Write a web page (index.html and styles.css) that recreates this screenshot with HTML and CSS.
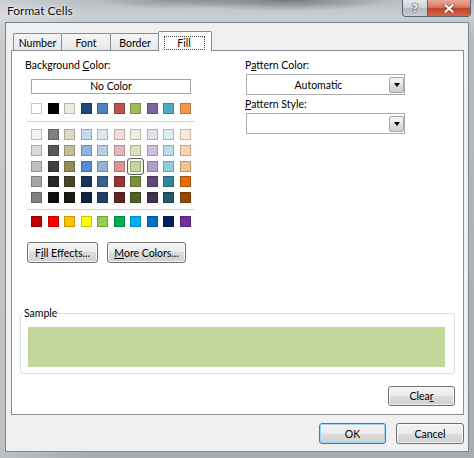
FILE: index.html
```html
<!DOCTYPE html>
<html>
<head>
<meta charset="utf-8">
<title>Format Cells</title>
<link rel="stylesheet" href="styles.css">
</head>
<body>
<div class="window">
  <div class="titlebar">
    <div class="title">Format Cells</div>
    <div class="caps">
      <div class="cap help">?</div>
      <div class="cap close"><svg width="12" height="9" viewBox="0 0 12 9"><path d="M2.5 1.2 L9.5 7.8 M9.5 1.2 L2.5 7.8" stroke="#3a1008" stroke-width="3.4" stroke-linecap="square" stroke-opacity=".45"/><path d="M2.5 1.2 L9.5 7.8 M9.5 1.2 L2.5 7.8" stroke="#fff" stroke-width="2" stroke-linecap="square"/></svg></div>
    </div>
  </div>
  <div class="client">
    <div class="tabs">
      <div class="tab t-number">Number</div>
      <div class="tab t-font">Font</div>
      <div class="tab t-border">Border</div>
      <div class="tab t-fill active"><span class="focus">Fill</span></div>
    </div>
    <div class="panel">
      <div class="top">
        <div class="col-left">
          <div class="label">Background <u>C</u>olor:</div>
          <div class="nocolor">No Color</div>
          <div class="swatches row-top">
            <span class="sw" style="background:#FFFFFF"></span>
            <span class="sw" style="background:#000000"></span>
            <span class="sw" style="background:#EEECE1"></span>
            <span class="sw" style="background:#1F497D"></span>
            <span class="sw" style="background:#4F81BD"></span>
            <span class="sw" style="background:#C0504D"></span>
            <span class="sw" style="background:#9BBB59"></span>
            <span class="sw" style="background:#8064A2"></span>
            <span class="sw" style="background:#4BACC6"></span>
            <span class="sw" style="background:#F79646"></span>
          </div>
          <div class="sep"></div>
          <div class="swatches theme">
            <span class="sw" style="background:#F2F2F2"></span>
            <span class="sw" style="background:#7F7F7F"></span>
            <span class="sw" style="background:#DDD9C4"></span>
            <span class="sw" style="background:#C5D9F1"></span>
            <span class="sw" style="background:#DCE6F1"></span>
            <span class="sw" style="background:#F2DCDB"></span>
            <span class="sw" style="background:#EBF1DE"></span>
            <span class="sw" style="background:#E4DFEC"></span>
            <span class="sw" style="background:#DAEEF3"></span>
            <span class="sw" style="background:#FDE9D9"></span>

            <span class="sw" style="background:#D9D9D9"></span>
            <span class="sw" style="background:#595959"></span>
            <span class="sw" style="background:#C4BD97"></span>
            <span class="sw" style="background:#8DB4E2"></span>
            <span class="sw" style="background:#B8CCE4"></span>
            <span class="sw" style="background:#E6B8B7"></span>
            <span class="sw" style="background:#D8E4BC"></span>
            <span class="sw" style="background:#CCC0DA"></span>
            <span class="sw" style="background:#B7DEE8"></span>
            <span class="sw" style="background:#FCD5B4"></span>

            <span class="sw" style="background:#BFBFBF"></span>
            <span class="sw" style="background:#404040"></span>
            <span class="sw" style="background:#948A54"></span>
            <span class="sw" style="background:#538DD5"></span>
            <span class="sw" style="background:#95B3D7"></span>
            <span class="sw" style="background:#DA9694"></span>
            <span class="sw sel" style="background:#C4D79B"></span>
            <span class="sw" style="background:#B1A0C7"></span>
            <span class="sw" style="background:#92CDDC"></span>
            <span class="sw" style="background:#FABF8F"></span>

            <span class="sw" style="background:#A6A6A6"></span>
            <span class="sw" style="background:#262626"></span>
            <span class="sw" style="background:#494529"></span>
            <span class="sw" style="background:#16365C"></span>
            <span class="sw" style="background:#366092"></span>
            <span class="sw" style="background:#963634"></span>
            <span class="sw" style="background:#76933C"></span>
            <span class="sw" style="background:#60497A"></span>
            <span class="sw" style="background:#31869B"></span>
            <span class="sw" style="background:#E26B0A"></span>

            <span class="sw" style="background:#808080"></span>
            <span class="sw" style="background:#0D0D0D"></span>
            <span class="sw" style="background:#1D1B10"></span>
            <span class="sw" style="background:#0F243E"></span>
            <span class="sw" style="background:#244062"></span>
            <span class="sw" style="background:#632523"></span>
            <span class="sw" style="background:#4F6228"></span>
            <span class="sw" style="background:#403151"></span>
            <span class="sw" style="background:#215967"></span>
            <span class="sw" style="background:#974706"></span>
          </div>
          <div class="sep s2"></div>
          <div class="swatches row-std">
            <span class="sw" style="background:#C00000"></span>
            <span class="sw" style="background:#FF0000"></span>
            <span class="sw" style="background:#FFC000"></span>
            <span class="sw" style="background:#FFFF00"></span>
            <span class="sw" style="background:#92D050"></span>
            <span class="sw" style="background:#00B050"></span>
            <span class="sw" style="background:#00B0F0"></span>
            <span class="sw" style="background:#0070C0"></span>
            <span class="sw" style="background:#002060"></span>
            <span class="sw" style="background:#7030A0"></span>
          </div>
          <div class="btn-row">
            <div class="btn b-fill">F<u>i</u>ll Effects...</div>
            <div class="btn b-more"><u>M</u>ore Colors...</div>
          </div>
        </div>
        <div class="col-right">
          <div class="label">P<u>a</u>ttern Color:</div>
          <div class="combo"><span class="combo-text">Automatic</span><span class="combo-arrow"></span></div>
          <div class="label l2"><u>P</u>attern Style:</div>
          <div class="combo"><span class="combo-text"></span><span class="combo-arrow"></span></div>
        </div>
      </div>
      <div class="group">
        <div class="legend">Sample</div>
        <div class="sample"></div>
      </div>
      <div class="clear-row"><div class="btn b-clear">Clea<u>r</u></div></div>
    </div>
    <div class="footer">
      <div class="btn b-ok">OK</div>
      <div class="btn b-cancel">Cancel</div>
    </div>
  </div>
</div>
</body>
</html>
```

FILE: styles.css
```css
* { box-sizing: border-box; }
html, body { margin: 0; padding: 0; }
body {
  width: 474px;
  height: 458px;
  overflow: hidden;
  font-family: Lato, "Open Sans", sans-serif;
  font-size: 10.5px;
  color: #000;
  background: #a9afb5;
}
u { text-decoration-thickness: 1px; text-underline-offset: 1px; }

.window {
  width: 474px;
  height: 458px;
  display: flex;
  flex-direction: column;
  background:
    radial-gradient(ellipse 110px 11px at 285px 0, rgba(70, 75, 82, .6), rgba(70, 75, 82, 0)),
    radial-gradient(ellipse 80px 9px at 175px 0, rgba(90, 95, 102, .45), rgba(90, 95, 102, 0)),
    linear-gradient(90deg, rgba(255,255,255,.25), rgba(255,255,255,0) 90px),
    linear-gradient(#b7bdc3, #c9ced2 16px, #b4bac0 40px, #a6acb2 100%);
}

.titlebar {
  height: 22px;
  display: flex;
  align-items: flex-start;
  justify-content: space-between;
}
.title {
  padding-left: 7px;
  font-size: 12px;
  line-height: 22px;
  color: #111;
  text-shadow: 0 0 5px rgba(255, 255, 255, .9), 0 0 2px rgba(255, 255, 255, .8);
}
.caps {
  display: flex;
  margin-right: 3px;
  height: 17px;
  border: 1px solid #59616b;
  border-top: none;
  border-radius: 0 0 4px 4px;
  overflow: hidden;
}
.cap {
  height: 16px;
  display: flex;
  align-items: center;
  justify-content: center;
}
.help {
  width: 25px;
  border-right: 1px solid #59616b;
  background: linear-gradient(#e4e7ea, #cdd2d7 48%, #b3bac2 52%, #c6ccd2);
  color: #f4f6f8;
  font-family: "DejaVu Sans", sans-serif;
  font-weight: bold;
  font-size: 11px;
  text-shadow: 0 0 1px #2a3340, 0 0 2px #2a3340;
}
.close {
  width: 42px;
  background: linear-gradient(#eaa898, #d97964 45%, #c4432b 52%, #d2664c);
}

.client {
  margin: 0 5px;
  height: 430px;
  background: #f0f0f0;
  border: 1px solid #7c838a;
  padding: 0 4px 0 5px;
}

.tabs {
  display: flex;
  align-items: flex-end;
  height: 19px;
  margin-top: 8px;
  padding-left: 2px;
}
.tab {
  height: 17px;
  padding-top: 1px;
  border: 1px solid #898c95;
  border-bottom: none;
  border-radius: 2px 2px 0 0;
  background: linear-gradient(#f6f6f6, #e6e6e6);
  display: flex;
  align-items: center;
  justify-content: center;
  line-height: 14px;
}
.t-number { width: 49px; }
.t-font { width: 50px; margin-left: -1px; }
.t-border { width: 50px; margin-left: -1px; }
.t-fill { width: 54px; margin-left: -2px; }
.tab.active {
  height: 20px;
  margin-bottom: -1px;
  padding-top: 0;
  background: #fff;
  position: relative;
  z-index: 1;
}
.focus {
  width: 41px;
  height: 14px;
  margin-top: 2px;
  margin-right: 2px;
  border: 1px dotted #444;
  display: flex;
  align-items: center;
  justify-content: center;
}

.panel {
  width: 453px;
  height: 365px;
  border: 1px solid #898c95;
  background: #fff;
  padding: 0 8px;
  display: flex;
  flex-direction: column;
}

.top {
  display: flex;
  padding-top: 7px;
}
.col-left { width: 180px; }
.col-right { margin-left: 44px; width: 162px; }

.label {
  height: 14px;
  line-height: 14px;
  margin-left: 5px;
}
.col-right .label { margin-left: 1px; }
.label.l2 { margin-top: 2px; }

.nocolor {
  margin: 7px 0 0 11px;
  width: 160px;
  height: 15px;
  border: 1px solid #a3a3a3;
  background: #fff;
  text-align: center;
  line-height: 13px;
}

.swatches {
  margin-left: 11px;
  width: 160px;
  display: grid;
  grid-template-columns: repeat(10, 11px);
  justify-content: space-between;
}
.row-top { margin-top: 9px; }
.theme { margin-top: 7px; row-gap: 4.75px; }
.row-std { margin-top: 6px; }

.sw {
  display: block;
  position: relative;
  width: 11px;
  height: 11px;
  border: 1px solid rgba(0, 0, 0, .22);
}
.sw.sel::after {
  content: "";
  position: absolute;
  inset: -4px;
  border: 1.5px solid #5c5c5c;
  border-radius: 3px;
  box-shadow: inset 0 0 0 1.5px #eef3e2;
}

.sep {
  margin: 7px 0 0 7px;
  width: 167px;
  height: 1px;
  background: #c6d3e1;
}
.sep.s2 { margin-top: 6px; }

.btn-row {
  display: flex;
  gap: 9px;
  margin: 15px 0 0 7px;
}

.btn {
  height: 21px;
  border: 1px solid #707070;
  border-radius: 3px;
  background: linear-gradient(#f3f3f3, #ebebeb 50%, #dddddd 50%, #d0d0d0);
  box-shadow: inset 0 0 0 1px rgba(255, 255, 255, .75);
  display: flex;
  align-items: center;
  justify-content: center;
  line-height: 14px;
  color: #000;
}
.b-fill { width: 71px; }
.b-more { width: 79px; }

.combo {
  margin: 2px 0 0 2px;
  width: 159px;
  height: 21px;
  border: 1px solid #abadb3;
  background: #fff;
  display: flex;
  align-items: center;
  padding: 1px 0 1px 1px;
}
.combo-text {
  flex: 1;
  text-align: center;
  line-height: 14px;
}
.combo-arrow {
  width: 15px;
  height: 16px;
  border: 1px solid #a5a5a5;
  border-radius: 2px;
  background: linear-gradient(#f3f3f3, #ebebeb 50%, #dddddd 50%, #d0d0d0);
  display: flex;
  align-items: center;
  justify-content: center;
}
.combo-arrow::after {
  content: "";
  width: 0;
  height: 0;
  border-left: 3.5px solid transparent;
  border-right: 3.5px solid transparent;
  border-top: 4px solid #000;
}

.group {
  margin-top: 50px;
  height: 61px;
  border: 1px solid #d5dfe5;
  border-radius: 3px;
  box-shadow: inset 0 0 0 1px #fff;
}
.legend {
  margin: -8px 0 0 2px;
  width: fit-content;
  padding: 0 1px;
  background: #fff;
  line-height: 14px;
}
.sample {
  margin: 7px 0 0 7px;
  width: 417px;
  height: 40px;
  background: #c4d79b;
}

.clear-row {
  display: flex;
  justify-content: flex-end;
  margin-top: 12px;
}
.b-clear { width: 67px; height: 20px; }

.footer {
  display: flex;
  justify-content: flex-end;
  gap: 10px;
  margin-top: 8px;
}
.b-ok {
  width: 67px;
  border-color: #3c7fb1;
  box-shadow: inset 0 0 0 1px #9fd6f3;
}
.b-cancel { width: 68px; }
```
